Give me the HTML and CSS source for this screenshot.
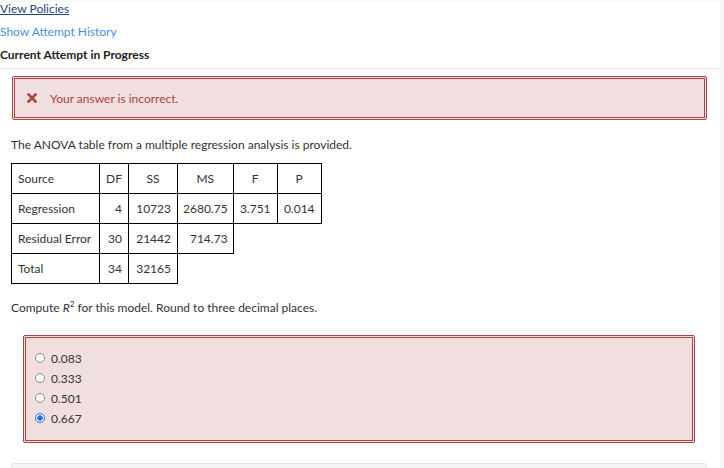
FILE: index.html
```html
<!DOCTYPE html>
<html lang="en">
<head>
    <meta charset="UTF-8">
    <meta name="viewport" content="width=device-width, initial-scale=1.0">
    <title>Question</title>
    <link rel="stylesheet" href="styles.css">
</head>
<body>

    <div class="page">

        <!-- Attempt links -->
        <div class="attempt-links">
            <a href="#" class="policies">View Policies</a>
            <a href="#" class="history">Show Attempt History</a>
            <div class="attempt-title">Current Attempt in Progress</div>
        </div>

        <div class="content">

            <!-- Feedback -->
            <div class="alert">
                <svg class="alert-icon" width="10" height="10" viewBox="0 0 10 10">
                    <path d="M1.5 1.5 L8.5 8.5 M8.5 1.5 L1.5 8.5" stroke="#a94442" stroke-width="2.6" stroke-linecap="square"/>
                </svg>
                <span>Your answer is incorrect.</span>
            </div>

            <p class="question">The ANOVA table from a multiple regression analysis is provided.</p>

            <!-- ANOVA table -->
            <table class="anova">
                <tr>
                    <th class="c-source">Source</th>
                    <th class="c-df">DF</th>
                    <th class="c-ss">SS</th>
                    <th class="c-ms">MS</th>
                    <th class="c-f">F</th>
                    <th class="c-p">P</th>
                </tr>
                <tr>
                    <td class="label">Regression</td>
                    <td>4</td>
                    <td>10723</td>
                    <td class="c-ms">2680.75</td>
                    <td>3.751</td>
                    <td>0.014</td>
                </tr>
                <tr>
                    <td class="label">Residual Error</td>
                    <td>30</td>
                    <td>21442</td>
                    <td class="c-ms">714.73</td>
                </tr>
                <tr>
                    <td class="label">Total</td>
                    <td>34</td>
                    <td>32165</td>
                </tr>
            </table>

            <p class="question">Compute <i>R</i><sup>2</sup> for this model. Round to three decimal places.</p>

            <!-- Answer choices -->
            <div class="answers">
                <label class="choice"><input type="radio" name="r2" disabled> 0.083</label>
                <label class="choice"><input type="radio" name="r2" disabled> 0.333</label>
                <label class="choice"><input type="radio" name="r2" disabled> 0.501</label>
                <label class="choice"><input type="radio" name="r2" checked disabled> 0.667</label>
            </div>

            <div class="footer-box"></div>
        </div>
    </div>

</body>
</html>
```

FILE: styles.css
```css
body {
    font-family: Lato, "Open Sans", sans-serif;
    font-size: 12px;
    color: #333;
    background-color: #f7f7f7;
    margin: 0;
    padding: 0;
}

.page {
    width: 720px;
    height: 468px;
    background-color: #fff;
    border-top: 2px solid #f7f7f7;
    box-sizing: border-box;
    overflow: hidden;
}

.attempt-links {
    border-bottom: 1px solid #e8e8e8;
    padding-bottom: 5px;
}

.attempt-links a,
.attempt-title {
    display: block;
    line-height: 16px;
    margin-bottom: 7px;
    text-decoration: none;
}

.attempt-links .policies {
    color: #24467a;
    text-decoration: underline;
    margin-top: -1px;
}

.attempt-links .history {
    color: #4a8fd8;
}

.attempt-title {
    font-weight: bold;
    color: #222;
    margin-bottom: 0;
}

.content {
    padding: 7px 13px 0 11px;
}

.alert {
    display: flex;
    align-items: center;
    height: 38px;
    margin-left: 1px;
    padding-left: 12px;
    background-color: #f1dede;
    border: 3px double #a94442;
    border-radius: 2px;
    color: #a94442;
}

.alert-icon {
    margin-right: 13px;
}

.question {
    margin: 17px 0 10px;
    line-height: 16px;
}

.question sup {
    font-size: 8px;
    line-height: 0;
}

.anova {
    border-collapse: collapse;
}

.anova th,
.anova td {
    border: 1px solid #000;
    padding: 7px 6px;
    line-height: 15px;
    font-weight: normal;
    text-align: right;
}

.anova th {
    text-align: center;
}

.anova th.c-source,
.anova td.label {
    text-align: left;
}

.c-source { width: 75px; }
.c-df { width: 16px; }
.c-ss { width: 36px; }
.c-f { width: 31px; }
.c-p { width: 31px; }

.anova .c-ms {
    width: 44px;
    padding-left: 5px;
    padding-right: 5px;
}

.anova + .question {
    margin-top: 16px;
    margin-bottom: 19px;
}

.answers {
    margin: 0 12px;
    padding: 10px 0 12px 9px;
    background-color: #f1dede;
    border: 3px double #a94442;
    border-radius: 2px;
}

.choice {
    display: flex;
    align-items: center;
    height: 20px;
    color: #333;
}

.choice input {
    appearance: none;
    -webkit-appearance: none;
    width: 10px;
    height: 10px;
    margin: 0 6px 0 0;
    border: 1px solid #8a8a8a;
    border-radius: 50%;
    background-color: #fff;
    box-sizing: border-box;
}

.choice input:checked {
    border-color: #1a73e8;
    background: radial-gradient(circle, #1a73e8 0 2.5px, #fff 3px);
}

.footer-box {
    margin-top: 20px;
    height: 30px;
    background-color: #f5f5f5;
    border: 1px solid #e3e3e3;
    border-radius: 3px;
}
```
